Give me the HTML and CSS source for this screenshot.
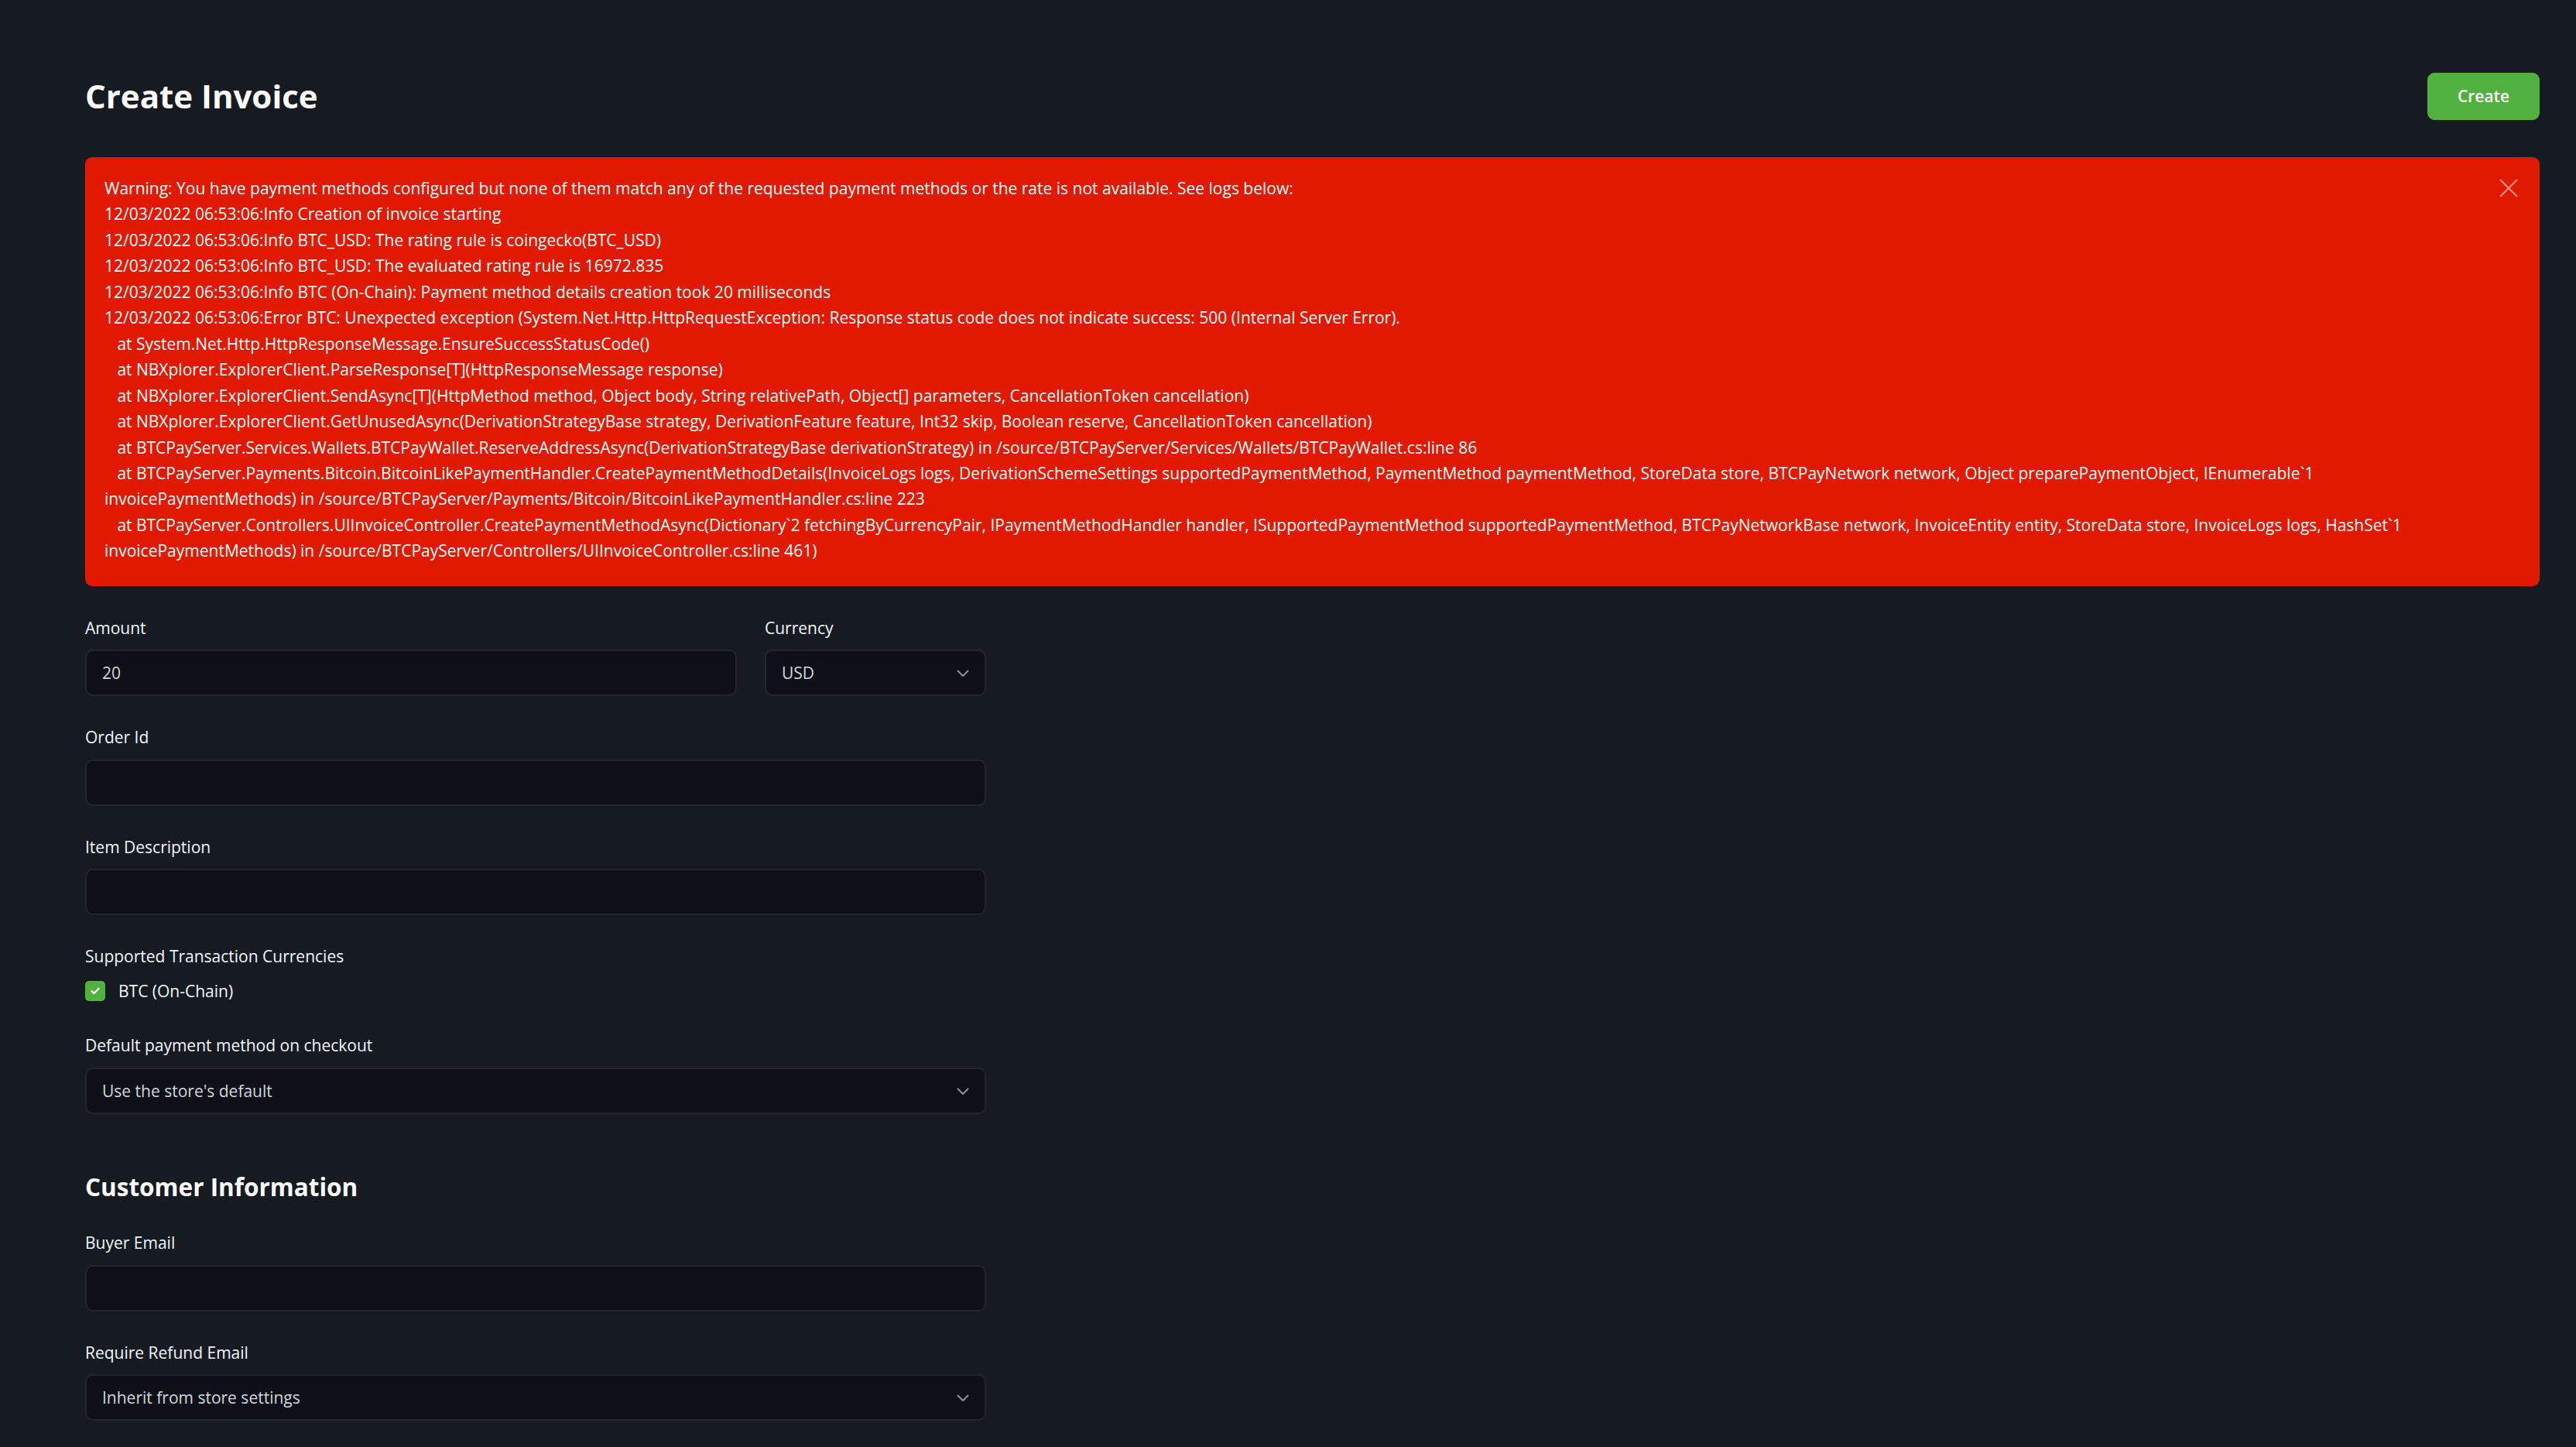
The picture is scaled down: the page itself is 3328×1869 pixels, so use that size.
FILE: index.html
```html
<!DOCTYPE html>
<html lang="en">
<head>
    <meta charset="UTF-8">
    <meta name="viewport" content="width=device-width, initial-scale=1.0">
    <title>Create Invoice</title>
    <link rel="stylesheet" href="styles.css">
</head>
<body>
    <div class="page">
        <div class="page-header">
            <h2>Create Invoice</h2>
            <button class="btn-create">Create</button>
        </div>

        <div class="alert-danger">
            <button class="alert-close" aria-label="Close">
                <svg viewBox="0 0 24 24" width="24" height="24"><path d="M1 1L23 23M23 1L1 23" stroke="currentColor" stroke-width="2.4" fill="none"/></svg>
            </button>
            <div class="alert-log">Warning: You have payment methods configured but none of them match any of the requested payment methods or the rate is not available. See logs below:
12/03/2022 06:53:06:Info Creation of invoice starting
12/03/2022 06:53:06:Info BTC_USD: The rating rule is coingecko(BTC_USD)
12/03/2022 06:53:06:Info BTC_USD: The evaluated rating rule is 16972.835
12/03/2022 06:53:06:Info BTC (On-Chain): Payment method details creation took 20 milliseconds
12/03/2022 06:53:06:Error BTC: Unexpected exception (System.Net.Http.HttpRequestException: Response status code does not indicate success: 500 (Internal Server Error).
   at System.Net.Http.HttpResponseMessage.EnsureSuccessStatusCode()
   at NBXplorer.ExplorerClient.ParseResponse[T](HttpResponseMessage response)
   at NBXplorer.ExplorerClient.SendAsync[T](HttpMethod method, Object body, String relativePath, Object[] parameters, CancellationToken cancellation)
   at NBXplorer.ExplorerClient.GetUnusedAsync(DerivationStrategyBase strategy, DerivationFeature feature, Int32 skip, Boolean reserve, CancellationToken cancellation)
   at BTCPayServer.Services.Wallets.BTCPayWallet.ReserveAddressAsync(DerivationStrategyBase derivationStrategy) in /source/BTCPayServer/Services/Wallets/BTCPayWallet.cs:line 86
   at BTCPayServer.Payments.Bitcoin.BitcoinLikePaymentHandler.CreatePaymentMethodDetails(InvoiceLogs logs, DerivationSchemeSettings supportedPaymentMethod, PaymentMethod paymentMethod, StoreData store, BTCPayNetwork network, Object preparePaymentObject, IEnumerable`1 invoicePaymentMethods) in /source/BTCPayServer/Payments/Bitcoin/BitcoinLikePaymentHandler.cs:line 223
   at BTCPayServer.Controllers.UIInvoiceController.CreatePaymentMethodAsync(Dictionary`2 fetchingByCurrencyPair, IPaymentMethodHandler handler, ISupportedPaymentMethod supportedPaymentMethod, BTCPayNetworkBase network, InvoiceEntity entity, StoreData store, InvoiceLogs logs, HashSet`1 invoicePaymentMethods) in /source/BTCPayServer/Controllers/UIInvoiceController.cs:line 461)</div>
        </div>

        <form class="invoice-form">
            <div class="form-row">
                <div class="form-group">
                    <label for="amount">Amount</label>
                    <input id="amount" class="form-control" type="text" value="20">
                </div>
                <div class="form-group">
                    <label for="currency">Currency</label>
                    <div class="select-wrap">
                        <select id="currency" class="form-select">
                            <option>USD</option>
                        </select>
                        <svg class="chevron" viewBox="0 0 16 9" width="16" height="9"><path d="M1 1L8 8L15 1" stroke="currentColor" stroke-width="2" fill="none"/></svg>
                    </div>
                </div>
            </div>

            <div class="form-group">
                <label for="order-id">Order Id</label>
                <input id="order-id" class="form-control" type="text">
            </div>

            <div class="form-group">
                <label for="item-desc">Item Description</label>
                <input id="item-desc" class="form-control" type="text">
            </div>

            <div class="form-group">
                <label>Supported Transaction Currencies</label>
                <div class="check-row">
                    <span class="check-box">
                        <svg viewBox="0 0 12 10" width="12" height="10"><path d="M1.5 5.2L4.5 8L10.5 1.8" stroke="#fff" stroke-width="2.4" fill="none" stroke-linecap="round" stroke-linejoin="round"/></svg>
                    </span>
                    <span>BTC (On-Chain)</span>
                </div>
            </div>

            <div class="form-group">
                <label for="default-method">Default payment method on checkout</label>
                <div class="select-wrap">
                    <select id="default-method" class="form-select">
                        <option>Use the store's default</option>
                    </select>
                    <svg class="chevron" viewBox="0 0 16 9" width="16" height="9"><path d="M1 1L8 8L15 1" stroke="currentColor" stroke-width="2" fill="none"/></svg>
                </div>
            </div>

            <h3 class="section-title">Customer Information</h3>

            <div class="form-group">
                <label for="buyer-email">Buyer Email</label>
                <input id="buyer-email" class="form-control" type="text">
            </div>

            <div class="form-group">
                <label for="refund-email">Require Refund Email</label>
                <div class="select-wrap">
                    <select id="refund-email" class="form-select">
                        <option>Inherit from store settings</option>
                    </select>
                    <svg class="chevron" viewBox="0 0 16 9" width="16" height="9"><path d="M1 1L8 8L15 1" stroke="currentColor" stroke-width="2" fill="none"/></svg>
                </div>
            </div>
        </form>
    </div>
</body>
</html>
```

FILE: styles.css
```css
html, body {
    margin: 0;
    background-color: #161b22;
}

body {
    font-family: "Open Sans", "Noto Sans", sans-serif;
    font-size: 21px;
    line-height: 33.45px;
    color: #f0f6fc;
}

.page {
    padding: 94px 47px 40px 110px;
}

.page-header {
    display: flex;
    justify-content: space-between;
    align-items: center;
    margin-bottom: 48px;
}

.page-header h2 {
    margin: 0;
    font-size: 42px;
    font-weight: 700;
    line-height: 1.2;
    color: #ffffff;
}

.btn-create {
    font-family: inherit;
    font-size: 21px;
    font-weight: 600;
    line-height: 33px;
    color: #ffffff;
    background-color: #51b13e;
    border: 1px solid #51b13e;
    border-radius: 9px;
    padding: 13px 38px;
    cursor: pointer;
}

.alert-danger {
    position: relative;
    background-color: #e11900;
    border-radius: 9px;
    padding: 24px 90px 28px 25px;
    margin-bottom: 38px;
    color: #ffffff;
}

.alert-log {
    white-space: pre-wrap;
}

.alert-close {
    position: absolute;
    top: 28px;
    right: 28px;
    width: 24px;
    height: 24px;
    padding: 0;
    border: 0;
    background: none;
    color: rgba(255, 255, 255, 0.5);
    cursor: pointer;
}

.alert-close svg {
    display: block;
}

.invoice-form {
    width: 1164px;
}

.form-row {
    display: grid;
    grid-template-columns: 842px 286px;
    column-gap: 36px;
}

.form-group {
    margin-bottom: 37px;
}

.form-group label {
    display: block;
    margin-bottom: 11px;
    color: #f0f6fc;
}

.form-control,
.form-select {
    display: block;
    box-sizing: border-box;
    width: 100%;
    height: 60px;
    padding: 0 20px;
    font-family: inherit;
    font-size: 21px;
    color: #d0d7de;
    background-color: #0d1117;
    border: 2px solid #21262d;
    border-radius: 10px;
    outline: none;
}

.form-select {
    appearance: none;
    -webkit-appearance: none;
    padding-right: 60px;
}

.select-wrap {
    position: relative;
}

.chevron {
    position: absolute;
    right: 22px;
    top: 26px;
    color: #8b949e;
    pointer-events: none;
}

.check-row {
    display: flex;
    align-items: center;
    gap: 17px;
    margin-top: 2px;
}

.check-box {
    display: flex;
    align-items: center;
    justify-content: center;
    width: 26px;
    height: 26px;
    border-radius: 5px;
    background-color: #51b13e;
}

.section-title {
    margin: 75px 0 38px;
    font-size: 31.5px;
    font-weight: 700;
    line-height: 1.2;
    color: #ffffff;
}
```
